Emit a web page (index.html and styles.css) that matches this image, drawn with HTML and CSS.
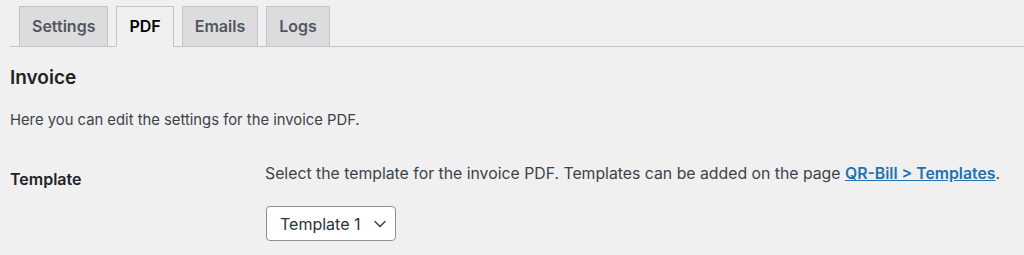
FILE: index.html
```html
<!DOCTYPE html>
<html lang="en">
<head>
<meta charset="utf-8">
<title>QR-Bill Settings</title>
<link rel="stylesheet" href="styles.css">
</head>
<body>
<div class="wrap">
  <nav class="tabs">
    <a class="tab" href="#">Settings</a>
    <a class="tab active" href="#">PDF</a>
    <a class="tab" href="#">Emails</a>
    <a class="tab" href="#">Logs</a>
  </nav>
  <h2 class="title">Invoice</h2>
  <p class="intro">Here you can edit the settings for the invoice PDF.</p>
  <div class="row">
    <div class="label">Template</div>
    <div class="field">
      <p class="desc">Select the template for the invoice PDF. Templates can be added on the page <a href="#" class="link">QR-Bill &gt; Templates</a>.</p>
      <div class="select">
        <span class="select-text">Template 1</span>
        <svg class="chevron" width="12" height="8" viewBox="0 0 12 8"><path d="M1 1.5 L6 6.5 L11 1.5" fill="none" stroke="#3c434a" stroke-width="1.5" stroke-linecap="round" stroke-linejoin="round"/></svg>
      </div>
    </div>
  </div>
</div>
</body>
</html>
```
FILE: styles.css
```css
html, body {
  margin: 0;
  padding: 0;
  background: #f0f0f1;
}
body {
  font-family: Inter, "Noto Sans", sans-serif;
  color: #3c434a;
  font-size: 15px;
}
.wrap {
  padding-left: 10px;
  padding-top: 6px;
}
.tabs {
  display: flex;
  border-bottom: 1px solid #c3c4c7;
  padding-left: 1px;
}
.tab {
  display: block;
  margin-left: 8px;
  margin-bottom: -1px;
  padding: 6px 12px;
  line-height: 27px;
  font-size: 16px;
  font-weight: 600;
  color: #50575e;
  background: #dcdcde;
  border: 1px solid #c3c4c7;
  text-decoration: none;
}
.tab.active {
  background: #f0f0f1;
  color: #000;
  border-bottom-color: #f0f0f1;
}
.title {
  margin: 18px 0 0;
  font-size: 19px;
  line-height: 26px;
  font-weight: 600;
  color: #1d2327;
}
.intro {
  margin: 18px 0 0;
  font-size: 14.8px;
  line-height: 22px;
}
.row {
  display: flex;
  margin-top: 31px;
}
.label {
  width: 255px;
  padding-top: 5px;
  font-size: 16px;
  line-height: 24px;
  font-weight: 600;
  color: #1d2327;
}
.desc {
  margin: 0;
  font-size: 15.8px;
  line-height: 24px;
}
.link {
  color: #2271b1;
  font-weight: 600;
  text-decoration: underline;
}
.select {
  margin-top: 20px;
  margin-left: 1px;
  width: 130px;
  height: 35px;
  box-sizing: border-box;
  border: 1px solid #8c8f94;
  border-radius: 4px;
  background: #fff;
  display: flex;
  align-items: center;
  justify-content: space-between;
  padding: 0 9px 0 13px;
  font-size: 16px;
  color: #2c3338;
}
```
